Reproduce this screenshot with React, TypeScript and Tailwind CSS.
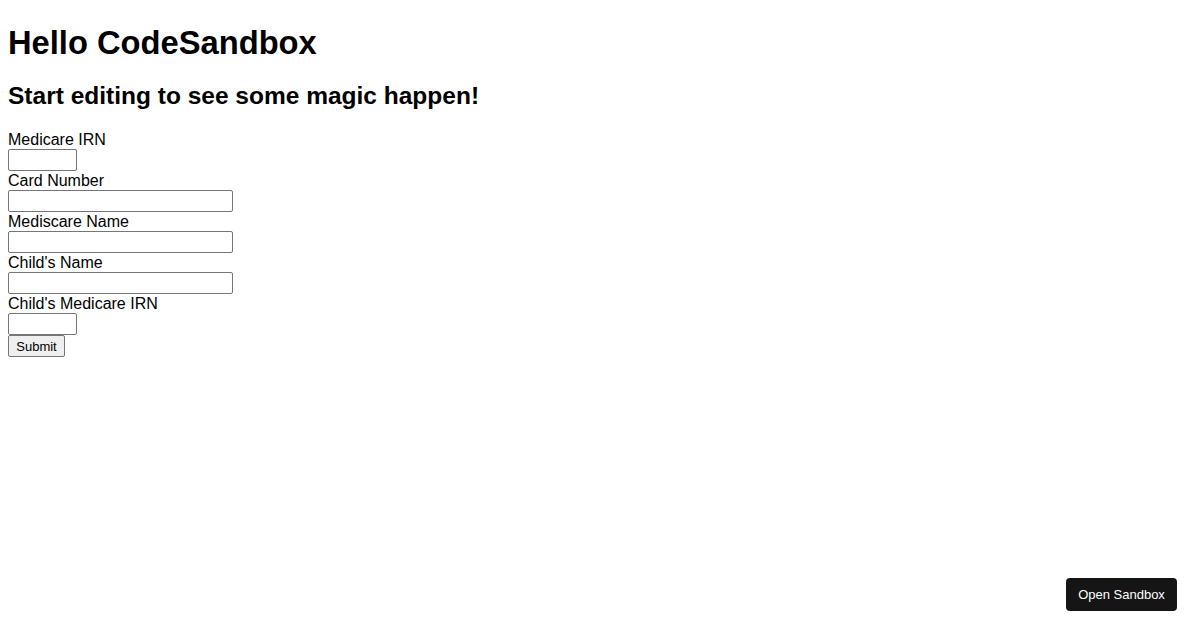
const fields = [
  { label: "Medicare IRN", wide: false },
  { label: "Card Number", wide: true },
  { label: "Mediscare Name", wide: true },
  { label: "Child's Name", wide: true },
  { label: "Child's Medicare IRN", wide: false },
];

const App = () => {
  return (
    <div className="relative h-[630px] w-full bg-white p-2 font-['Liberation_Sans',Arial,sans-serif] text-black">
      <h1 className="mt-[16px] text-[32.7px] font-bold leading-[37px]">
        Hello CodeSandbox
      </h1>
      <h2 className="mt-[21px] text-[24.5px] font-bold leading-[28px]">
        Start editing to see some magic happen!
      </h2>

      <form className="mt-[20px] flex flex-col items-start">
        {fields.map((field) => (
          <div key={field.label} className="flex flex-col items-start">
            <label className="text-[16px] leading-[19px]">{field.label}</label>
            <input
              type="text"
              className={`h-[22px] rounded-[2px] border border-[#767676] bg-white px-[2px] text-[13px] ${
                field.wide ? "w-[225px]" : "w-[69px]"
              }`}
            />
          </div>
        ))}
        <button
          type="button"
          className="h-[22px] w-[57px] rounded-[2px] border border-[#767676] bg-[#efefef] text-[13px] leading-none"
        >
          Submit
        </button>
      </form>

      <button
        type="button"
        className="absolute bottom-[19px] right-[23px] h-[33px] w-[111px] rounded-[4px] bg-[#151515] text-[13px] text-white"
      >
        Open Sandbox
      </button>
    </div>
  );
};

export default App;
